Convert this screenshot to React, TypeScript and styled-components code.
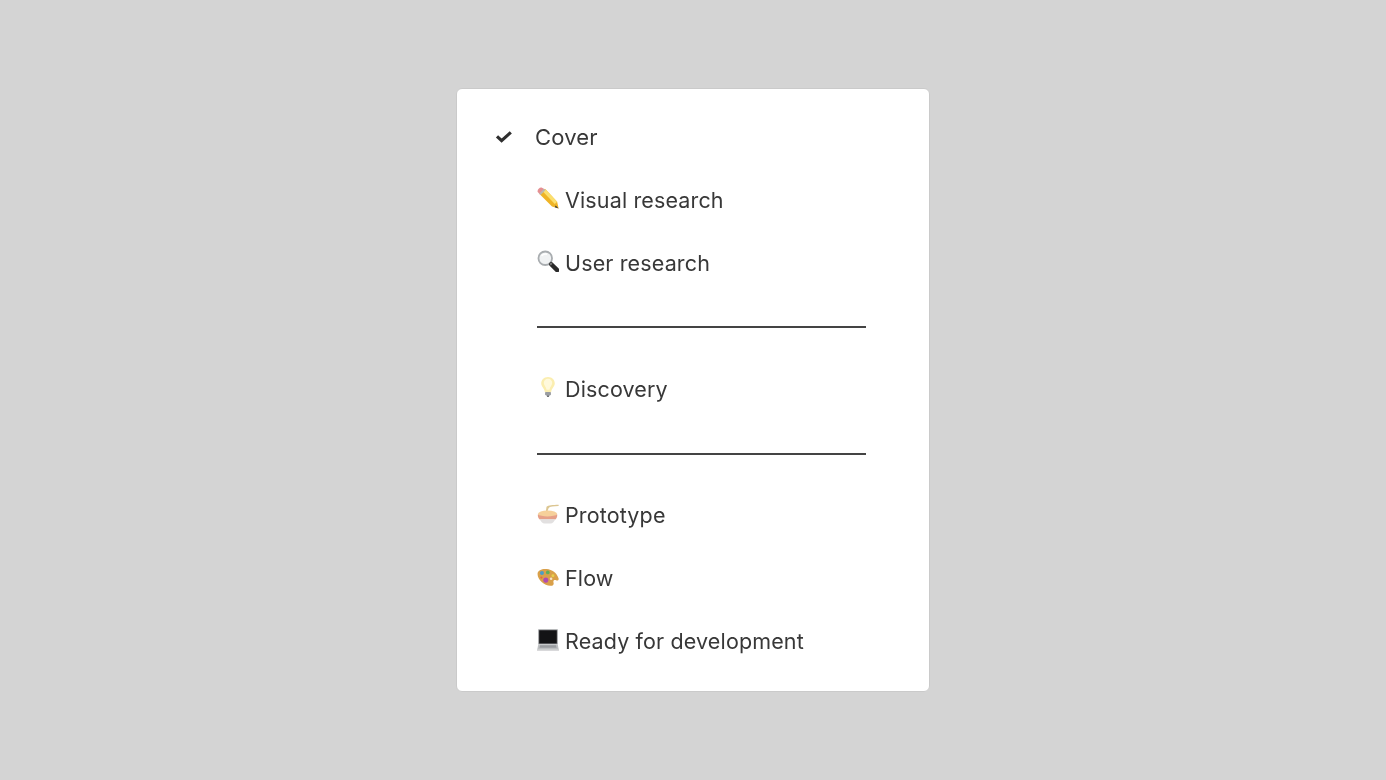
import React from 'react'
import styled, { createGlobalStyle } from 'styled-components'

const GlobalStyle = createGlobalStyle`
  html, body {
    margin: 0;
    padding: 0;
    background: #d4d4d4;
  }
`

const Page = styled.div`
  width: 1386px;
  height: 780px;
  display: flex;
  align-items: flex-start;
  justify-content: center;
  padding-top: 88px;
  box-sizing: border-box;
`

const Menu = styled.div`
  width: 474px;
  height: 604px;
  box-sizing: border-box;
  padding: 16px 0;
  background: #fff;
  border: 1px solid #cacaca;
  border-radius: 6px;
  font-family: Inter, "Liberation Sans", sans-serif;
  color: #383838;
  filter: blur(0.35px);
`

const Row = styled.div<{ $active?: boolean }>`
  height: 63.1px;
  display: flex;
  align-items: center;
  padding-left: 78px;
  font-size: ${p => (p.$active ? '22px' : '21.5px')};
  letter-spacing: ${p => (p.$active ? '0.15px' : '0.14px')};
`

const CheckSlot = styled.span`
  position: absolute;
  margin: -2px 0 0 -40px;
  width: 18px;
  height: 16px;
  display: flex;
`

const Emoji = styled.svg`
  width: 22px;
  height: 22px;
  margin: -3px 6px 0 2px;
  flex: none;
`

const Rule = styled.div`
  width: 329px;
  height: 2px;
  margin: 3px 0 0 2px;
  background: #444;
`

const Check = () => (
  <svg width="18" height="16" viewBox="0 0 18 16">
    <path d="M2 8.4 L6.6 12.6 L15.8 4.4" fill="none" stroke="#2f2f2f" strokeWidth="3.2" />
  </svg>
)

const Pencil = () => (
  <Emoji viewBox="0 0 24 24">
    <path d="M3 8 L9 2.2 L22 16 L23.6 23.4 L16.4 21.4 Z" fill="#efb426" />
    <path d="M9 2.2 L22 16 L19.4 18.6 L6.4 4.8 Z" fill="#fbdf6e" />
    <path d="M0.8 5.4 C-0.2 3.2 3 -0.2 5.4 0.8 L9 2.8 L3.4 8.4 Z" fill="#e58f92" />
    <path d="M2.4 7 L7.6 1.8 L9.2 3.2 L4 8.6 Z" fill="#bdb8ae" />
    <path d="M20.4 20.2 L23.6 23.4 L19.4 22.2 Z" fill="#3a3a3a" />
  </Emoji>
)

const Magnifier = () => (
  <Emoji viewBox="0 0 24 24">
    <circle cx="9" cy="9" r="7.4" fill="#f0f2f3" stroke="#a9adb0" strokeWidth="2" />
    <path d="M5 6.5 C6.5 4.5 9 4 11 4.6" fill="none" stroke="#fff" strokeWidth="1.5" />
    <path d="M15.5 15.5 L22 22" stroke="#2a2a2a" strokeWidth="4.8" strokeLinecap="round" />
    <path d="M14.4 14.4 L16 16" stroke="#777" strokeWidth="2.6" />
  </Emoji>
)

const Bulb = () => (
  <Emoji viewBox="0 0 24 24">
    <path d="M12 1 C7.5 1 4.6 4.2 4.6 8 C4.6 11.6 8 13.4 8.6 17.6 L15.4 17.6 C16 13.4 19.4 11.6 19.4 8 C19.4 4.2 16.5 1 12 1 Z" fill="#fbeeb0" />
    <path d="M12 3 C9.4 3 7.4 5 7.4 7.6 C7.4 10 10 12 10.4 15 L13.6 15 C14 12 16.6 10 16.6 7.6 C16.6 5 14.6 3 12 3 Z" fill="#fff9dc" />
    <rect x="8.8" y="17.4" width="6.4" height="3.6" rx="0.8" fill="#9a9da1" />
    <path d="M10.2 21 H13.8 L12.8 23 H11.2 Z" fill="#6a6d71" />
  </Emoji>
)

const Noodles = () => (
  <Emoji viewBox="0 0 24 24">
    <path d="M10.4 4 C12.4 2.4 17 2 23.6 1.8 L23.6 3.4 C18 3.6 14 4 12.6 5.6 L10.8 11 H9.4 Z" fill="#dcc692" />
    <ellipse cx="11.5" cy="12" rx="10.5" ry="3.8" fill="#f6d09a" />
    <path d="M1 12.4 C4 15.4 19 15.4 22 12.4 C22.4 15 21.6 17 20 18 H3 C1.4 17 0.6 15 1 12.4 Z" fill="#e6a088" />
    <path d="M3 17.6 H20 C19 20 16.8 22.4 15 22.4 H8 C6.2 22.4 4 20 3 17.6 Z" fill="#e2e0e0" />
  </Emoji>
)

const Palette = () => (
  <Emoji viewBox="0 0 24 24">
    <path d="M0.6 8.6 C0.6 4.4 5.5 2.8 10.5 3.2 C16.5 3.7 21.6 7.6 23.4 13 C24.2 15.4 22.6 16.2 20.8 15.6 C18.8 15 17.4 15.8 18 18 C18.8 20.6 17 22 14.6 21.6 C8 21 0.6 15 0.6 8.6 Z" fill="#d9a04a" />
    <circle cx="5.4" cy="7.6" r="2.2" fill="#4a9cc8" />
    <circle cx="11.8" cy="7" r="2" fill="#5fae5a" />
    <circle cx="17.4" cy="10.6" r="1.6" fill="#e8cf4a" />
    <circle cx="9.6" cy="15.4" r="2.8" fill="#b04bb0" />
    <circle cx="15.4" cy="14" r="1.4" fill="#f6e4c8" />
    <circle cx="4.8" cy="12.6" r="1.2" fill="#e5673f" />
  </Emoji>
)

const Laptop = () => (
  <Emoji viewBox="0 0 24 24">
    <rect x="1.4" y="0.4" width="21.2" height="16.4" fill="#8d8f92" />
    <rect x="2.4" y="1.4" width="19.2" height="14.4" fill="#131315" />
    <path d="M1.4 16.8 H22.6 L24 23.4 H0 Z" fill="#bdbfc1" />
    <path d="M3.4 17.8 H20.6 L21.4 20.4 H2.6 Z" fill="#9a9c9f" />
    <rect x="0" y="22.2" width="24" height="1.4" fill="#d6d7d8" />
  </Emoji>
)

const App = () => {
  return (
    <Page>
      <GlobalStyle />
      <Menu>
        <Row $active>
          <CheckSlot><Check /></CheckSlot>
          Cover
        </Row>
        <Row><Pencil />Visual research</Row>
        <Row><Magnifier />User research</Row>
        <Row><Rule /></Row>
        <Row><Bulb />Discovery</Row>
        <Row><Rule /></Row>
        <Row><Noodles />Prototype</Row>
        <Row><Palette />Flow</Row>
        <Row><Laptop />Ready for development</Row>
      </Menu>
    </Page>
  )
}

export default App
